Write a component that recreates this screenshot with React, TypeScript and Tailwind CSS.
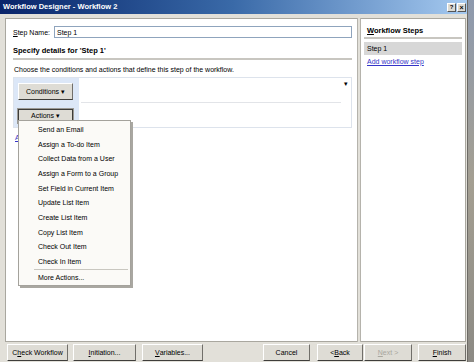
import React from 'react';

const actions = [
    'Send an Email',
    'Assign a To-do Item',
    'Collect Data from a User',
    'Assign a Form to a Group',
    'Set Field in Current Item',
    'Update List Item',
    'Create List Item',
    'Copy List Item',
    'Check Out Item',
    'Check In Item',
];

const WinButton = ({ children, className = '', disabled = false }: any) => (
    <div className={`h-[17px] flex items-center justify-center bg-[#dedcd5] border border-t-white border-l-white border-r-[#716f6a] border-b-[#3f3e3b] ${disabled ? 'text-[#a9a79f]' : 'text-black'} ${className}`}>
        {children}
    </div>
);

const ActionsMenu = () => (
    <div className="absolute left-[12px] top-[101px] w-[113px] bg-[#fbfaf7] border border-[#a4a29c] shadow-[2px_2px_0_#a9a7a1] pt-[1px]">
        {actions.map((a) => (
            <div key={a} className="h-[14.7px] flex items-center pl-[19px]">{a}</div>
        ))}
        <div className="h-[1px] bg-[#c9c7c0] ml-[15px] mr-[2px] mb-[1px]" />
        <div className="h-[14px] flex items-center pl-[19px]">More Actions...</div>
    </div>
);

export default function App() {
    return (
        <div className="w-[474px] h-[362px] flex overflow-hidden font-['Liberation_Sans',Arial,sans-serif] text-[7px] text-black leading-none">
            <div className="w-[467px] flex flex-col bg-[#e2e0d9]">
                {/* title bar */}
                <div className="h-[14px] flex items-center pl-[3px] pr-[1px] bg-gradient-to-r from-[#0a246a] via-[#3a6aa8] to-[#a6caf0]">
                    <span className="text-white font-bold text-[7.5px]">Workflow Designer - Workflow 2</span>
                    <div className="ml-auto flex gap-[1px]">
                        <div className="w-[9px] h-[9px] bg-[#dcdad3] border border-t-white border-l-white border-r-[#555] border-b-[#555] flex items-center justify-center text-[6px] font-bold">?</div>
                        <div className="w-[9px] h-[9px] bg-[#dcdad3] border border-t-white border-l-white border-r-[#555] border-b-[#555] flex items-center justify-center text-[7px] font-bold">×</div>
                    </div>
                </div>

                <div className="flex-1 flex flex-col pl-[5px] pt-[4px]">
                    <div className="h-[324px] flex">
                        {/* left panel */}
                        <div className="w-[352px] bg-white border border-[#a9a79f] border-r-0 pl-[7px] pr-[5px] pt-[7px] relative">
                            <div className="flex items-center">
                                <span className="w-[41px]"><span className="underline">S</span>tep Name:</span>
                                <div className="flex-1 h-[12px] border border-[#8fa4bd] flex items-center pl-[2px]">Step 1</div>
                            </div>
                            <div className="mt-[9px] font-bold text-[7.5px] pb-[3px] border-b-2 border-[#c8c6c0]">Specify details for 'Step 1'</div>
                            <div className="mt-[6px] pl-[1px]">Choose the conditions and actions that define this step of the workflow.</div>

                            <div className="mt-[4px] h-[51px] flex border border-[#dde3ec]">
                                <div className="w-[65px] bg-[#dce7f7] flex flex-col pl-[4px] pt-[5px] gap-[9px]">
                                    <WinButton className="w-[55px] h-[14px]">Conditions ▾</WinButton>
                                    <div className="w-[55px] h-[14px] flex items-center justify-center bg-[#dedcd5] border border-[#3d3c39] outline outline-1 outline-[#9b9994]">Actions ▾</div>
                                </div>
                                <div className="flex-1 flex flex-col">
                                    <div className="h-[24px] flex justify-end pr-[3px] pt-[2px] text-[7px]">▾</div>
                                    <div className="h-[1px] bg-[#e2e4e8] mx-[2px] mr-[10px]" />
                                </div>
                            </div>
                            <div className="mt-[6px] pl-[2px] text-[#3434c8] underline">Add 'Else If' Conditional Branch</div>

                            <ActionsMenu />
                        </div>

                        {/* splitter */}
                        <div className="w-[4px] flex">
                            <div className="w-[1px] bg-[#b5b3ac]" />
                            <div className="w-[1px] bg-[#e2e0d9]" />
                            <div className="w-[1px] bg-[#e2e0d9]" />
                            <div className="w-[1px] bg-[#b5b3ac]" />
                        </div>

                        {/* right panel */}
                        <div className="w-[105px] bg-white border border-l-0 border-[#a9a79f] px-[3px] pt-[8px]">
                            <div className="pl-[3px] font-bold text-[7.5px] pb-[2px] border-b-2 border-[#c8c6c0]"><span className="underline">W</span>orkflow Steps</div>
                            <div className="mt-[3px] h-[13px] bg-[#d7d7d7] flex items-center pl-[3px]">Step 1</div>
                            <div className="mt-[3px] pl-[3px] text-[#3434c8] underline">Add workflow step</div>
                        </div>
                    </div>

                    {/* bottom buttons */}
                    <div className="flex mt-[2px] pl-[2px]">
                        <WinButton className="w-[61px]">C<span className="underline">h</span>eck Workflow</WinButton>
                        <WinButton className="w-[63px] ml-[5px]"><span className="underline">I</span>nitiation...</WinButton>
                        <WinButton className="w-[61px] ml-[6px]"><span className="underline">V</span>ariables...</WinButton>
                        <WinButton className="w-[47px] ml-[60px]">Cancel</WinButton>
                        <WinButton className="w-[46px] ml-[7px]">&lt; <span className="underline">B</span>ack</WinButton>
                        <WinButton className="w-[48px] ml-[1px]" disabled><span className="underline">N</span>ext &gt;</WinButton>
                        <WinButton className="w-[48px] ml-[6px]"><span className="underline">F</span>inish</WinButton>
                    </div>
                </div>
            </div>
            <div className="w-[7px] bg-gradient-to-b from-[#8e9aae] via-[#a49f92] to-[#8c8a84] border-l border-[#6d6b66]" />
        </div>
    );
}
